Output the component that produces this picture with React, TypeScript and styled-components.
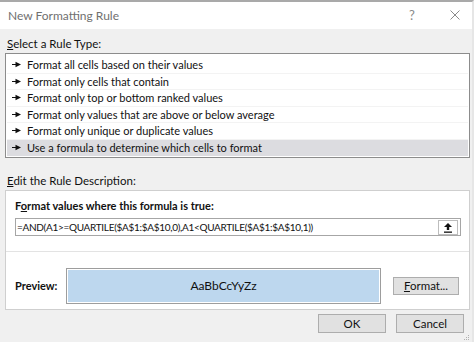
import React from 'react';
import styled, { createGlobalStyle } from 'styled-components';

const Global = createGlobalStyle`
  html, body {
    margin: 0;
    padding: 0;
    background: #ffffff;
  }
  * {
    box-sizing: border-box;
  }
`

const Dialog = styled.div`
  width: 474px;
  height: 342px;
  display: flex;
  flex-direction: column;
  font-family: Lato, "Noto Sans", sans-serif;
  font-size: 11px;
  color: #111;
  border-top: 2px solid #a9a9a9;
  border-right: 2px solid #e6e6e6;
  overflow: hidden;
`

const TitleBar = styled.div`
  height: 27px;
  flex-shrink: 0;
  display: flex;
  align-items: center;
  padding-left: 8px;
  padding-bottom: 1px;
  background: #ffffff;
  color: #707070;
  font-size: 12px;
`

const TitleText = styled.span`
  flex: 1;
`

const TitleIcon = styled.span<{ $gap?: number }>`
  width: 34px;
  margin-right: ${(p) => p.$gap ?? 0}px;
  display: flex;
  justify-content: center;
  color: #8a8a8a;
  font-size: 13px;
`

const Body = styled.div`
  flex: 1;
  min-height: 0;
  background: #f0f0f0;
  padding: 6px 2px 0 5px;
  display: flex;
  flex-direction: column;
`

const SectionLabel = styled.div<{ $top?: number }>`
  flex-shrink: 0;
  padding-left: 2px;
  height: 18px;
  line-height: 18px;
  font-size: 11.5px;
  margin-top: ${(p) => p.$top ?? 0}px;
`

const ListBox = styled.div`
  flex-shrink: 0;
  height: 105px;
  border: 1px solid #8c8c8c;
  background: #ffffff;
  padding: 3px 1px 1px 1px;
  display: flex;
  flex-direction: column;
`

const ListRow = styled.div<{ $selected?: boolean }>`
  height: 16.6px;
  display: flex;
  align-items: center;
  gap: 6px;
  padding-left: 5px;
  background: ${(p) => (p.$selected ? '#dcdce0' : 'transparent')};
  border-bottom: 1px solid ${(p) => (p.$selected ? '#dcdce0' : '#f3f3f3')};
  white-space: nowrap;
`

const Panel = styled.div`
  flex-shrink: 0;
  height: 120px;
  border: 1px solid #cfcfcf;
  background: #ffffff;
  display: flex;
  flex-direction: column;
`

const PanelTop = styled.div`
  padding: 6px 8px 0 9px;
  height: 61px;
  border-bottom: 1px solid #e3e3e3;
  display: flex;
  flex-direction: column;
`

const BoldLabel = styled.div`
  font-weight: 700;
  height: 18px;
  line-height: 18px;
`

const FormulaInput = styled.div`
  margin-top: 3px;
  height: 18px;
  border: 1px solid #a6a6a6;
  display: flex;
  align-items: center;
  padding-left: 1px;
  padding-right: 2px;
  white-space: nowrap;
  font-size: 10px;
  letter-spacing: -0.3px;
`

const FormulaText = styled.span`
  flex: 1;
  overflow: hidden;
`

const RefButton = styled.span`
  width: 20px;
  height: 15px;
  border: 1px solid #bdbdbd;
  display: flex;
  align-items: center;
  justify-content: center;
`

const PreviewRow = styled.div`
  flex: 1;
  display: flex;
  align-items: center;
  padding: 10px 10px 0 9px;
`

const PreviewLabel = styled.div`
  font-weight: 700;
  width: 51px;
`

const PreviewBox = styled.div`
  width: 315px;
  height: 36px;
  border: 1px solid #9d9d9d;
  box-shadow: inset 0 0 0 1px #ffffff;
  background: #bdd7ee;
  display: flex;
  align-items: center;
  justify-content: center;
  font-size: 12px;
`

const Button = styled.button<{ $w?: number }>`
  width: ${(p) => p.$w ?? 68}px;
  height: 19px;
  padding: 0;
  border: 1px solid #adadad;
  background: #e1e1e1;
  font-family: inherit;
  font-size: 11.5px;
  color: #111;
`

const FormatButton = styled(Button)`
  margin-left: auto;
  height: 18px;
`

const Footer = styled.div`
  flex-shrink: 0;
  display: flex;
  justify-content: flex-end;
  gap: 10px;
  padding: 4px 6px 0 0;
  position: relative;
`

const Grip = styled.span`
  position: absolute;
  right: 0;
  bottom: -10px;
  display: flex;
`

const U = styled.span`
  text-decoration: underline;
`

function Arrow() {
  return (
    <svg width="9" height="7" viewBox="0 0 9 7">
      <rect x="0" y="3" width="4" height="1" fill="#111" />
      <path d="M3.5 0.8 L9 3.5 L3.5 6.2 Z" fill="#111" />
    </svg>
  );
}

const rules = [
  'Format all cells based on their values',
  'Format only cells that contain',
  'Format only top or bottom ranked values',
  'Format only values that are above or below average',
  'Format only unique or duplicate values',
  'Use a formula to determine which cells to format',
];

export default function App() {
  return (
    <>
      <Global />
      <Dialog>
        <TitleBar>
          <TitleText>New Formatting Rule</TitleText>
          <TitleIcon $gap={9}>?</TitleIcon>
          <TitleIcon>
            <svg width="10" height="10" viewBox="0 0 10 10">
              <path d="M0.5 0.5 L9.5 9.5 M9.5 0.5 L0.5 9.5" stroke="#8a8a8a" strokeWidth="1" />
            </svg>
          </TitleIcon>
        </TitleBar>
        <Body>
          <SectionLabel>
            <U>S</U>elect a Rule Type:
          </SectionLabel>
          <ListBox>
            {rules.map((r, i) => (
              <ListRow key={r} $selected={i === rules.length - 1}>
                <Arrow />
                {r}
              </ListRow>
            ))}
          </ListBox>
          <SectionLabel $top={14}>
            <U>E</U>dit the Rule Description:
          </SectionLabel>
          <Panel>
            <PanelTop>
              <BoldLabel>
                F<U>o</U>rmat values where this formula is true:
              </BoldLabel>
              <FormulaInput>
                <FormulaText>=AND(A1&gt;=QUARTILE($A$1:$A$10,0),A1&lt;QUARTILE($A$1:$A$10,1))</FormulaText>
                <RefButton>
                  <svg width="10" height="11" viewBox="0 0 10 11">
                    <path d="M5 1 L9 5 L6.2 5 L6.2 8 L3.8 8 L3.8 5 L1 5 Z" fill="#111" />
                    <rect x="1" y="9.5" width="8" height="1.3" fill="#111" />
                  </svg>
                </RefButton>
              </FormulaInput>
            </PanelTop>
            <PreviewRow>
              <PreviewLabel>Preview:</PreviewLabel>
              <PreviewBox>AaBbCcYyZz</PreviewBox>
              <FormatButton $w={66}>
                <U>F</U>ormat...
              </FormatButton>
            </PreviewRow>
          </Panel>
          <Footer>
            <Button>OK</Button>
            <Button>Cancel</Button>
            <Grip>
              <svg width="8" height="8" viewBox="0 0 8 8">
                <rect x="6" y="0" width="1" height="1" fill="#b0b0b0" />
                <rect x="4" y="2" width="1" height="1" fill="#b0b0b0" />
                <rect x="6" y="2" width="1" height="1" fill="#b0b0b0" />
                <rect x="2" y="4" width="1" height="1" fill="#b0b0b0" />
                <rect x="4" y="4" width="1" height="1" fill="#b0b0b0" />
                <rect x="6" y="4" width="1" height="1" fill="#b0b0b0" />
              </svg>
            </Grip>
          </Footer>
        </Body>
      </Dialog>
    </>
  );
}
